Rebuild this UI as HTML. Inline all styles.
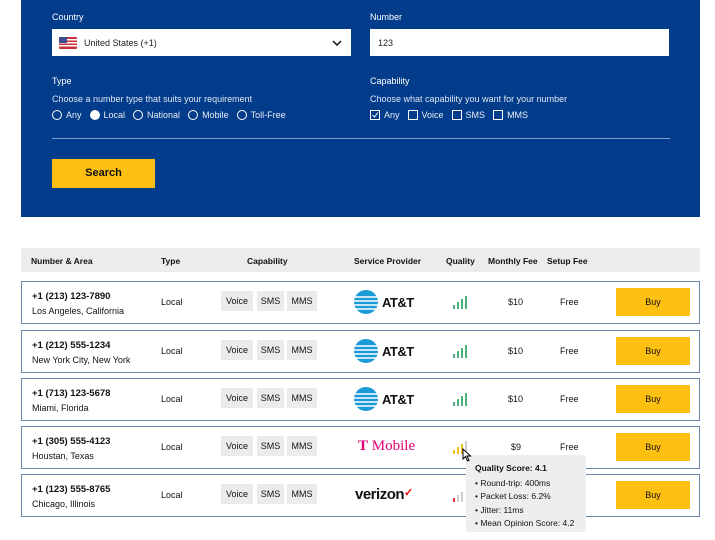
<!DOCTYPE html><html><head><style>
*{box-sizing:border-box;margin:0;padding:0}
body{width:715px;height:540px;background:#fff;font-family:"Liberation Sans",sans-serif;position:relative;overflow:hidden;color:#111}
.abs{position:absolute}
.panel{left:21px;top:0;width:679px;height:217px;background:#033c8a}
.lbl{color:#fff;font-size:9px}
.inp{background:#fff;height:27px;font-size:9px;color:#222;display:flex;align-items:center}
.r{display:inline-flex;align-items:center;margin-right:8px}
.circ{width:10px;height:10px;border:1px solid #fff;border-radius:50%;margin-right:4px;display:inline-block}
.box{width:10px;height:10px;border:1px solid #fff;margin-right:4px;display:inline-block;position:relative}
.hdr{left:21px;top:248px;width:679px;height:24px;background:#ececec;font-size:8.5px;font-weight:bold}
.hdr span{position:absolute;top:8px}
.row{left:21px;width:679px;height:43px;border:1.5px solid #6b86ad;font-size:8.5px}
.row .n{position:absolute;left:10px;top:9px;font-weight:bold;font-size:9.5px}
.row .a{position:absolute;left:10px;top:24px;font-size:9px}
.row .t{position:absolute;left:139px;top:15px;font-size:9px}
.pill{position:absolute;top:9px;height:20px;background:#ebebeb;line-height:20px;text-align:center;font-size:9px}
.row .fee{position:absolute;left:486px;top:15px;font-size:9px}
.row .sf{position:absolute;left:538px;top:15px;font-size:9px}
.buy{position:absolute;left:594px;top:6px;width:74px;height:28px;background:#fdbf10;text-align:center;line-height:28px;font-size:9px}
.bars{position:absolute;left:431px;top:13px;width:16px;height:14px}
.bars i{position:absolute;bottom:0;width:2px}
.att{position:absolute;left:332px;top:8px;display:flex;align-items:center;font-weight:bold;font-size:13px;letter-spacing:-0.5px}
</style></head><body>
<div class="abs panel"></div>
<div class="abs lbl" style="left:52px;top:12px">Country</div>
<div class="abs inp" style="left:52px;top:29px;width:299px">
 <svg width="18" height="12" style="margin:0 7px 0 7px"><rect width="18" height="12" fill="#c8323a" rx="1"/><rect y="2" width="18" height="1.5" fill="#fff"/><rect y="5" width="18" height="1.5" fill="#fff"/><rect y="8" width="18" height="1.5" fill="#fff"/><rect width="8" height="6" fill="#3b4f8c"/></svg>
 United States (+1)
 <svg width="10" height="6" style="position:absolute;right:9px;top:11px"><path d="M1 1L5 5L9 1" stroke="#111" stroke-width="1.5" fill="none"/></svg>
</div>
<div class="abs lbl" style="left:370px;top:12px">Number</div>
<div class="abs inp" style="left:370px;top:29px;width:299px;padding-left:8px">123</div>
<div class="abs lbl" style="left:52px;top:76px">Type</div>
<div class="abs lbl" style="left:52px;top:94px;color:#dfe6f2">Choose a number type that suits your requirement</div>
<div class="abs lbl" style="left:52px;top:110px;display:flex;color:#e8edf5">
 <span class="r"><i class="circ"></i>Any</span><span class="r"><i class="circ" style="background:#fff"></i>Local</span><span class="r"><i class="circ"></i>National</span><span class="r"><i class="circ"></i>Mobile</span><span class="r"><i class="circ"></i>Toll-Free</span>
</div>
<div class="abs lbl" style="left:370px;top:76px">Capability</div>
<div class="abs lbl" style="left:370px;top:94px;color:#dfe6f2">Choose what capability you want for your number</div>
<div class="abs lbl" style="left:370px;top:110px;display:flex;color:#e8edf5">
 <span class="r"><i class="box"><svg width="8" height="8" style="position:absolute;left:0;top:0"><path d="M1.5 4L3.5 6L7 1.5" stroke="#fff" fill="none"/></svg></i>Any</span><span class="r"><i class="box"></i>Voice</span><span class="r"><i class="box"></i>SMS</span><span class="r"><i class="box"></i>MMS</span>
</div>
<div class="abs" style="left:52px;top:138px;width:618px;height:1px;background:#7d9ccc"></div>
<div class="abs" style="left:52px;top:159px;width:103px;height:29px;background:#fdbf10;font-weight:bold;font-size:11px;text-align:center;line-height:29px">Search</div>

<div class="abs hdr"><span style="left:10px">Number &amp; Area</span><span style="left:140px">Type</span><span style="left:226px">Capability</span><span style="left:333px">Service Provider</span><span style="left:425px">Quality</span><span style="left:467px">Monthly Fee</span><span style="left:526px">Setup Fee</span></div>

<div class="abs row" style="top:281px"><div class="n">+1 (213) 123-7890</div><div class="a">Los Angeles, California</div><div class="t">Local</div>
<div class="pill" style="left:199px;width:32px">Voice</div><div class="pill" style="left:235px;width:27px">SMS</div><div class="pill" style="left:265px;width:30px">MMS</div>
<div class="att"><svg width="24" height="24" style="margin-right:4px"><circle cx="12" cy="12" r="12" fill="#1b9ad6"/><g stroke="#fff" stroke-width="1.4"><path d="M0 7H24M0 11H24M0 15H24M2 19H22"/></g></svg>AT&amp;T</div>
<div class="bars"><i style="left:0;height:4px;background:#4caf7c"></i><i style="left:4px;height:7px;background:#4caf7c"></i><i style="left:8px;height:10px;background:#4caf7c"></i><i style="left:12px;height:13px;background:#4caf7c"></i></div>
<div class="fee">$10</div><div class="sf">Free</div><div class="buy">Buy</div></div>

<div class="abs row" style="top:330px"><div class="n">+1 (212) 555-1234</div><div class="a">New York City, New York</div><div class="t">Local</div>
<div class="pill" style="left:199px;width:32px">Voice</div><div class="pill" style="left:235px;width:27px">SMS</div><div class="pill" style="left:265px;width:30px">MMS</div>
<div class="att"><svg width="24" height="24" style="margin-right:4px"><circle cx="12" cy="12" r="12" fill="#1b9ad6"/><g stroke="#fff" stroke-width="1.4"><path d="M0 7H24M0 11H24M0 15H24M2 19H22"/></g></svg>AT&amp;T</div>
<div class="bars"><i style="left:0;height:4px;background:#4caf7c"></i><i style="left:4px;height:7px;background:#4caf7c"></i><i style="left:8px;height:10px;background:#4caf7c"></i><i style="left:12px;height:13px;background:#4caf7c"></i></div>
<div class="fee">$10</div><div class="sf">Free</div><div class="buy">Buy</div></div>

<div class="abs row" style="top:378px"><div class="n">+1 (713) 123-5678</div><div class="a">Miami, Florida</div><div class="t">Local</div>
<div class="pill" style="left:199px;width:32px">Voice</div><div class="pill" style="left:235px;width:27px">SMS</div><div class="pill" style="left:265px;width:30px">MMS</div>
<div class="att"><svg width="24" height="24" style="margin-right:4px"><circle cx="12" cy="12" r="12" fill="#1b9ad6"/><g stroke="#fff" stroke-width="1.4"><path d="M0 7H24M0 11H24M0 15H24M2 19H22"/></g></svg>AT&amp;T</div>
<div class="bars"><i style="left:0;height:4px;background:#4caf7c"></i><i style="left:4px;height:7px;background:#4caf7c"></i><i style="left:8px;height:10px;background:#4caf7c"></i><i style="left:12px;height:13px;background:#4caf7c"></i></div>
<div class="fee">$10</div><div class="sf">Free</div><div class="buy">Buy</div></div>

<div class="abs row" style="top:426px"><div class="n">+1 (305) 555-4123</div><div class="a">Houstan, Texas</div><div class="t">Local</div>
<div class="pill" style="left:199px;width:32px">Voice</div><div class="pill" style="left:235px;width:27px">SMS</div><div class="pill" style="left:265px;width:30px">MMS</div>
<div style="position:absolute;left:336px;top:11px;color:#e20074;font-family:'Liberation Serif',serif;font-size:15px"><b>T</b> Mobile</div>
<div class="bars"><i style="left:0;height:4px;background:#f2c01a"></i><i style="left:4px;height:7px;background:#f2c01a"></i><i style="left:8px;height:10px;background:#f2c01a"></i><i style="left:12px;height:13px;background:#ccc"></i></div>
<div class="fee" style="left:489px">$9</div><div class="sf">Free</div><div class="buy">Buy</div></div>

<div class="abs row" style="top:474px"><div class="n">+1 (123) 555-8765</div><div class="a">Chicago, Illinois</div><div class="t">Local</div>
<div class="pill" style="left:199px;width:32px">Voice</div><div class="pill" style="left:235px;width:27px">SMS</div><div class="pill" style="left:265px;width:30px">MMS</div>
<div style="position:absolute;left:333px;top:11px;font-weight:bold;font-size:15px;letter-spacing:-0.5px">verizon<span style="color:#e00;font-size:11px;vertical-align:top">✓</span></div>
<div class="bars"><i style="left:0;height:4px;background:#d33"></i><i style="left:4px;height:7px;background:#ccc"></i><i style="left:8px;height:10px;background:#ccc"></i></div>
<div class="fee">$10</div><div class="sf">Free</div><div class="buy">Buy</div></div>

<div class="abs" style="left:466px;top:455px;width:120px;height:77px;background:#eeeeee;border-radius:3px;font-size:8.5px;padding:7px 9px;line-height:13.5px">
<div style="font-weight:bold;margin-bottom:1px">Quality Score: 4.1</div>
<div>• Round-trip: 400ms</div><div>• Packet Loss: 6.2%</div><div>• Jitter: 11ms</div><div>• Mean Opinion Score: 4.2</div></div>
<svg class="abs" style="left:462px;top:448px" width="10" height="14"><path d="M1 1V11L3.5 8.5L5.5 13L7 12.3L5 8H8.5Z" fill="#fff" stroke="#000" stroke-width="1"/></svg>
</body></html>
